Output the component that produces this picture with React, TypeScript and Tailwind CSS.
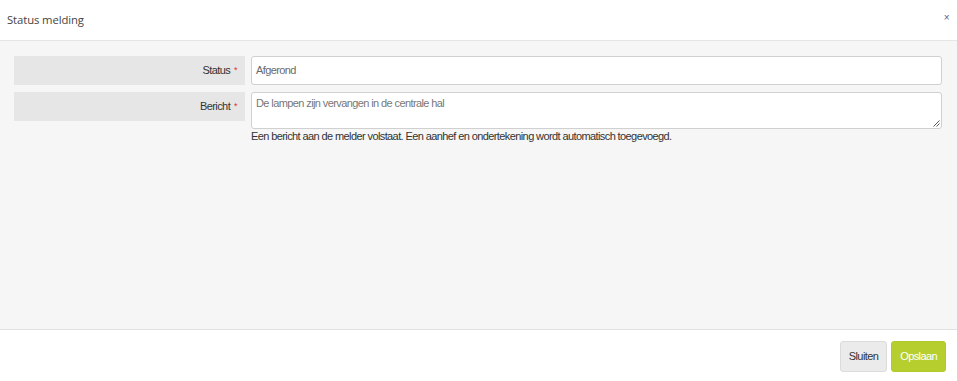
export default function App() {
  return (
    <div className="w-[957px] h-[381px] flex flex-col bg-white font-['Liberation_Sans',Arial,sans-serif] text-[11px] tracking-[-0.6px] text-[#333]">
      <div className="h-[41px] shrink-0 flex items-center justify-between border-b border-[#e5e5e5] pl-[7px] pr-[8px]">
        <div className="font-['Open_Sans',sans-serif] text-[11.3px] tracking-[-0.1px] text-[#444]">Status melding</div>
        <div className="text-[10px] leading-none text-[#5a5f8a] mt-[-4px]">×</div>
      </div>
      <div className="flex-1 bg-[#f6f6f6] border-b border-[#e2e2e2] pt-[15px] pl-[14px] pr-[15px] flex flex-col gap-[7px]">
        <div className="flex gap-[6px]">
          <div className="w-[231px] h-[29px] shrink-0 bg-[#e6e6e6] flex items-center justify-end pr-[8px]">
            <span>Status</span>
            <span className="text-[#e0301e] ml-[4px] text-[9px]">*</span>
          </div>
          <div className="flex-1 h-[29px] bg-white border border-[#d0d0d0] rounded-[3px] flex items-center px-[4px] text-[#6a6a6a]">
            Afgerond
          </div>
        </div>
        <div className="flex gap-[6px]">
          <div className="w-[231px] h-[29px] shrink-0 bg-[#e6e6e6] flex items-center justify-end pr-[8px]">
            <span>Bericht</span>
            <span className="text-[#e0301e] ml-[4px] text-[9px]">*</span>
          </div>
          <div className="flex-1 flex flex-col">
            <div className="relative h-[37px] bg-white border border-[#d0d0d0] rounded-[3px] px-[4px] pt-[2px] text-[#777]">
              De lampen zijn vervangen in de centrale hal
              <svg className="absolute right-[1px] bottom-[1px]" width="7" height="7" viewBox="0 0 7 7">
                <path d="M6.5 0.5 L0.5 6.5 M6.5 3.5 L3.5 6.5" stroke="#555" strokeWidth="1" />
              </svg>
            </div>
            <div className="leading-[14px]">
              Een bericht aan de melder volstaat. Een aanhef en ondertekening wordt automatisch toegevoegd.
            </div>
          </div>
        </div>
      </div>
      <div className="h-[51px] shrink-0 flex items-start justify-end gap-[4px] pt-[11px] pr-[11px]">
        <button className="h-[31px] px-[8px] bg-[#ebebeb] border border-[#dcdcdc] rounded-[3px] text-[#333]">Sluiten</button>
        <button className="h-[31px] px-[8px] bg-[#b6cf2f] border border-[#b0c92c] rounded-[3px] text-white">Opslaan</button>
      </div>
    </div>
  );
}
